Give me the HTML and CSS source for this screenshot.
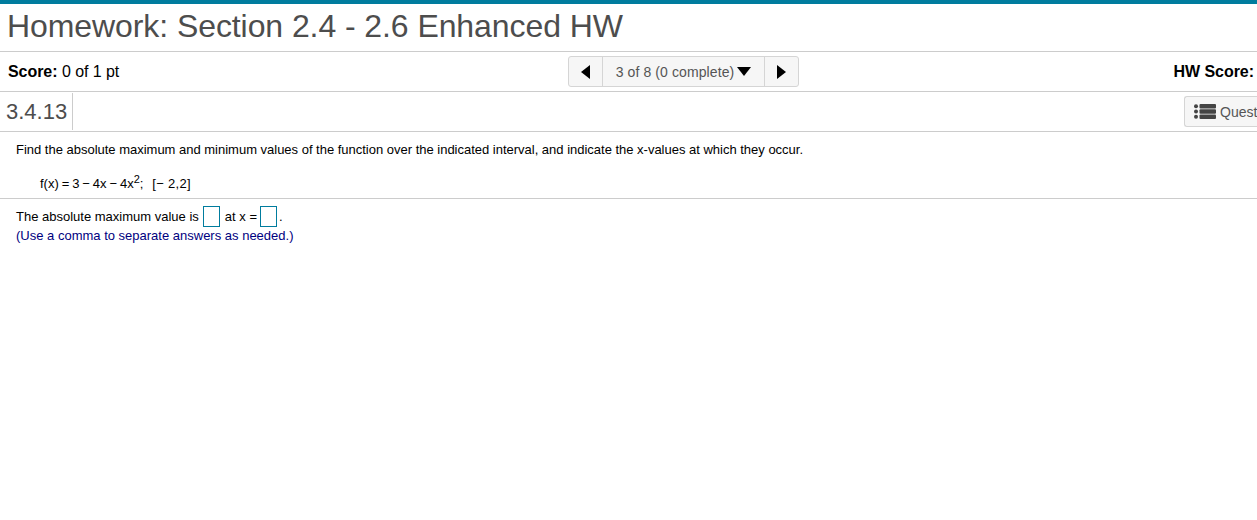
FILE: index.html
```html
<!DOCTYPE html>
<html lang="en">
<head>
    <meta charset="UTF-8">
    <title>Homework: Section 2.4 - 2.6 Enhanced HW</title>
    <link rel="stylesheet" href="styles.css">
</head>
<body>
    <div class="page">
        <div class="title-bar">
            <h1>Homework: Section 2.4 - 2.6 Enhanced HW</h1>
        </div>

        <div class="score-bar">
            <div class="score"><b>Score:</b> 0 of 1 pt</div>
            <div class="pager">
                <span class="pager-btn pager-prev"><span class="arrow-left"></span></span>
                <span class="pager-mid">3 of 8 (0 complete) <span class="arrow-down"></span></span>
                <span class="pager-btn pager-next"><span class="arrow-right"></span></span>
            </div>
            <div class="hw-score"><b>HW Score:</b></div>
        </div>

        <div class="question-bar">
            <div class="question-num">3.4.13</div>
            <div class="question-btn">
                <svg class="list-icon" width="22" height="15" viewBox="0 0 22 15">
                    <circle cx="2" cy="2.2" r="2"></circle>
                    <circle cx="2" cy="7.5" r="2"></circle>
                    <circle cx="2" cy="12.8" r="2"></circle>
                    <rect x="5.5" y="0" width="16.5" height="4.4" rx="1"></rect>
                    <rect x="5.5" y="5.3" width="16.5" height="4.4" rx="1"></rect>
                    <rect x="5.5" y="10.6" width="16.5" height="4.4" rx="1"></rect>
                </svg>
                <span>Question</span>
            </div>
        </div>

        <div class="content">
            <p class="prompt">Find the absolute maximum and minimum values of the function over the indicated interval, and indicate the x-values at which they occur.</p>
            <p class="formula">f(x) = 3 &minus; 4x &minus; 4x<sup>2</sup>;&nbsp; <span class="interval">[&minus; 2,2]</span></p>
            <div class="answer">
                <p class="answer-line">The absolute maximum value is <span class="blank"></span> at x = <span class="blank blank-x"></span>.</p>
                <p class="hint">(Use a comma to separate answers as needed.)</p>
            </div>
        </div>
    </div>
</body>
</html>
```

FILE: styles.css
```css
html, body {
    margin: 0;
    padding: 0;
    background: #fff;
    overflow: hidden;
}
body {
    font-family: "Liberation Sans", Arial, sans-serif;
    color: #000;
}
.page {
    width: 1257px;
    height: 520px;
    border-top: 4px solid #007c9e;
    box-sizing: border-box;
    overflow: hidden;
}
.title-bar {
    height: 47px;
    border-bottom: 1px solid #ccc;
    padding-left: 7px;
}
h1 {
    margin: 0;
    font-size: 32px;
    font-weight: normal;
    line-height: 44px;
    letter-spacing: -0.08px;
    color: #4d4d4d;
}
.score-bar {
    height: 39px;
    border-bottom: 1px solid #ccc;
    padding: 0 3px 0 8px;
    display: flex;
    align-items: center;
    font-size: 16px;
    letter-spacing: -0.05px;
}
.score {
    width: 560px;
}
.hw-score {
    flex: 1;
    text-align: right;
}
.pager {
    display: flex;
    height: 31px;
    box-sizing: border-box;
    border: 1px solid #d5d5d5;
    border-radius: 3px;
    background: #f6f6f6;
}
.pager-btn {
    width: 33px;
    display: flex;
    align-items: center;
    justify-content: center;
}
.pager-mid {
    width: 161px;
    border-left: 1px solid #d5d5d5;
    border-right: 1px solid #d5d5d5;
    display: flex;
    align-items: center;
    justify-content: center;
    gap: 3px;
    font-size: 14px;
    letter-spacing: 0.1px;
    color: #555;
}
.arrow-left {
    border-top: 7px solid transparent;
    border-bottom: 7px solid transparent;
    border-right: 9px solid #000;
}
.arrow-right {
    border-top: 7px solid transparent;
    border-bottom: 7px solid transparent;
    border-left: 9px solid #000;
}
.arrow-down {
    border-left: 7px solid transparent;
    border-right: 7px solid transparent;
    border-top: 9px solid #000;
}
.question-bar {
    height: 39px;
    border-bottom: 1px solid #ccc;
    display: flex;
    justify-content: space-between;
    align-items: center;
}
.question-num {
    height: 37px;
    width: 66px;
    padding-left: 6px;
    border-right: 1px solid #ccc;
    font-size: 22px;
    line-height: 37px;
    color: #4d4d4d;
}
.question-btn {
    width: 73px;
    height: 31px;
    box-sizing: border-box;
    border: 1px solid #d5d5d5;
    border-right: none;
    border-radius: 3px 0 0 3px;
    background: #f6f6f6;
    display: flex;
    align-items: center;
    gap: 4px;
    padding-left: 9px;
    font-size: 14px;
    color: #555;
    overflow: hidden;
    white-space: nowrap;
}
.list-icon {
    flex: none;
    fill: #444;
}
.content {
    font-size: 13px;
    padding-top: 10px;
}
.prompt {
    margin: 0 0 0 16px;
    line-height: 16px;
    letter-spacing: -0.01px;
}
.formula {
    margin: 16px 0 0 40px;
    height: 24px;
    line-height: 20px;
    word-spacing: -0.7px;
}
.formula sup {
    font-size: 11px;
    line-height: 0;
}
.interval {
    margin-left: 3px;
    word-spacing: 0;
    letter-spacing: 0.3px;
}
.answer {
    border-top: 1px solid #ccc;
    padding: 7px 0 0 16px;
}
.answer-line {
    margin: 0;
    line-height: 21px;
    display: flex;
    align-items: center;
}
.blank {
    width: 15px;
    height: 19px;
    border: 1px solid #007c9e;
    margin: 0 5px 0 4px;
    background: #fff;
}
.blank-x {
    margin: 0 2px 0 3px;
}
.hint {
    margin: 1px 0 0;
    line-height: 15px;
    color: #000080;
}
```
